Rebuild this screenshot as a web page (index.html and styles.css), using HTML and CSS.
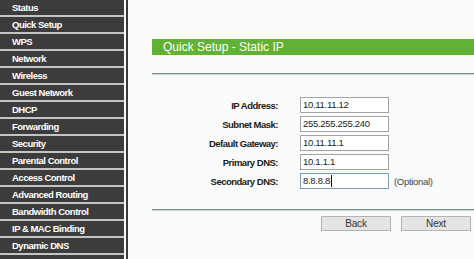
FILE: index.html
```html
<!DOCTYPE html>
<html>
    <head>
        <meta charset="utf-8">
        <title>Quick Setup - Static IP</title>
        <link rel="stylesheet" href="styles.css">
    </head>
    <body>
        <div class="page">
            <ul class="menu">
                <li>Status</li>
                <li>Quick Setup</li>
                <li>WPS</li>
                <li>Network</li>
                <li>Wireless</li>
                <li>Guest Network</li>
                <li>DHCP</li>
                <li>Forwarding</li>
                <li>Security</li>
                <li>Parental Control</li>
                <li>Access Control</li>
                <li>Advanced Routing</li>
                <li>Bandwidth Control</li>
                <li>IP &amp; MAC Binding</li>
                <li>Dynamic DNS</li>
            </ul>
            <div class="content">
                <div class="title">Quick Setup - Static IP</div>
                <hr class="rule">
                <form class="fields">
                    <label>IP Address:</label>
                    <div class="field">10.11.11.12</div>
                    <span></span>

                    <label>Subnet Mask:</label>
                    <div class="field">255.255.255.240</div>
                    <span></span>

                    <label>Default Gateway:</label>
                    <div class="field">10.11.11.1</div>
                    <span></span>

                    <label>Primary DNS:</label>
                    <div class="field">10.1.1.1</div>
                    <span></span>

                    <label>Secondary DNS:</label>
                    <div class="field active">8.8.8.8<span class="caret"></span></div>
                    <span class="note">(Optional)</span>
                </form>
                <hr class="rule bottom">
                <div class="buttons">
                    <button type="button" class="button">Back</button>
                    <button type="button" class="button">Next</button>
                </div>
            </div>
        </div>
    </body>
</html>
```

FILE: styles.css
```css
html, body {
    margin: 0;
    padding: 0;
    height: 100%;
    overflow: hidden;
}
body {
    background: #f9fafa;
    font-family: "Liberation Sans", Arial, sans-serif;
}
.page {
    display: flex;
    height: 259px;
}
.menu {
    list-style: none;
    margin: 0 2px 0 0;
    padding: 0;
    width: 124px;
    background: #3c3c3c;
    border-right: 2px solid #fbfbfb;
    box-shadow: 2px 0 0 #3a3a3a;
    flex: none;
    overflow: hidden;
}
.menu li {
    height: 15px;
    line-height: 15px;
    padding-left: 12px;
    border-bottom: 2px solid #c4c4c4;
    color: #ffffff;
    font-size: 9.5px;
    font-weight: bold;
    letter-spacing: -0.5px;
    white-space: nowrap;
}
.content {
    flex: 1;
    padding-left: 24px;
    padding-top: 39px;
    background: #f9fafa;
}
.title {
    background: #61b234;
    color: #ffffff;
    height: 16px;
    line-height: 16px;
    padding-left: 11px;
    font-size: 12px;
}
.rule {
    margin: 18px 0 0 0;
    border: none;
    border-top: 1px solid #7f8f8f;
    border-bottom: 1px solid #c9d1d1;
    height: 0;
}
.rule.bottom {
    margin-top: 20px;
}
.fields {
    display: grid;
    grid-template-columns: 126px 89px auto;
    grid-auto-rows: 16px;
    row-gap: 3px;
    column-gap: 22px;
    align-items: center;
    margin-top: 22px;
}
.fields label {
    text-align: right;
    font-size: 9.5px;
    font-weight: bold;
    letter-spacing: -0.5px;
    color: #1a1a1a;
}
.field {
    box-sizing: border-box;
    height: 16px;
    line-height: 14px;
    border: 1px solid #a3a3a3;
    background: #ffffff;
    padding-left: 2px;
    font-size: 9.5px;
    letter-spacing: -0.3px;
    color: #222222;
}
.field.active {
    border-color: #7c9cbe;
}
.caret {
    display: inline-block;
    width: 0;
    height: 12px;
    border-left: 1px solid #111111;
    vertical-align: middle;
    margin-left: 1px;
}
.note {
    margin-left: -17px;
    font-size: 9.5px;
    letter-spacing: -0.3px;
    color: #444444;
}
.buttons {
    display: flex;
    gap: 10px;
    margin-top: 5px;
    margin-left: 169px;
}
.button {
    width: 70px;
    height: 15px;
    padding: 0;
    border: 1px solid #b4b4b4;
    background: #e4e4e4;
    font-family: "Liberation Sans", Arial, sans-serif;
    font-size: 10px;
    letter-spacing: -0.2px;
    line-height: 13px;
    color: #333333;
}
```
